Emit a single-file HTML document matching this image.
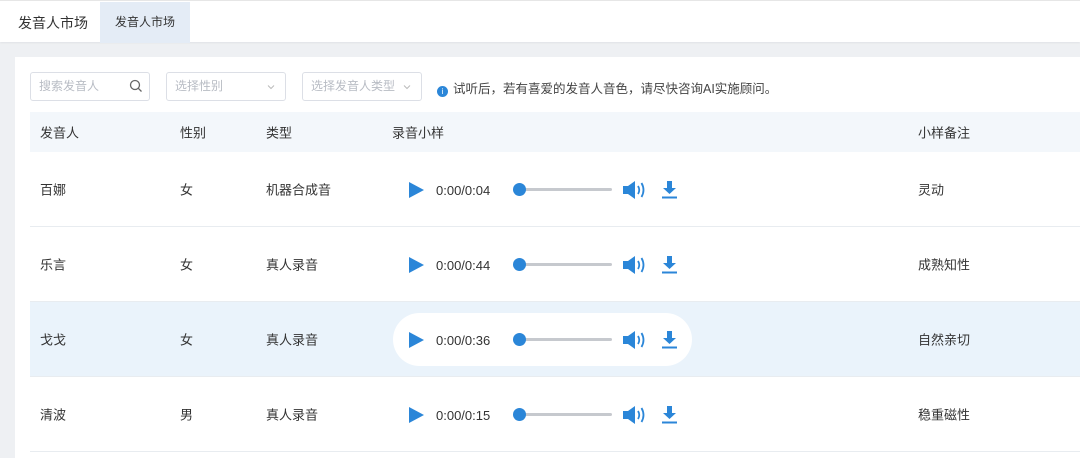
<!DOCTYPE html>
<html><head><meta charset="utf-8"><style>
*{margin:0;padding:0;box-sizing:border-box}
body{width:1080px;height:458px;overflow:hidden;background:#eef0f3;font-family:"Liberation Sans","Noto Sans CJK SC",sans-serif;color:#333;position:relative}
.top{position:absolute;left:0;top:0;width:1080px;height:42px;background:#fff;border-top:1px solid #e6e6e6;box-shadow:0 1px 2px rgba(0,0,0,.06)}
.tab1{position:absolute;left:18px;top:12px;font-size:14px;color:#333}
.tab2{position:absolute;left:100px;top:1px;width:90px;height:41px;background:#e4ecf6;font-size:12px;color:#333;text-align:center;line-height:40px}
.panel{position:absolute;left:15px;top:57px;width:1065px;height:401px;background:#fff}
.in{position:absolute;top:72px;height:29px;border:1px solid #dcdfe6;border-radius:3px;font-size:12px;color:#b8bcc4;line-height:27px;padding-left:8px;background:#fff}
.in svg{position:absolute}
.info{position:absolute;left:437px;top:78px;font-size:12.5px;color:#444}
.info i{display:inline-block;width:11px;height:11px;border-radius:50%;background:#2b86d8;vertical-align:-1px;margin-right:5px;color:#fff;font-size:8px;font-style:normal;text-align:center;line-height:11px}
.hd{position:absolute;left:30px;top:112px;width:1050px;height:40px;background:#f3f7fb;font-size:13px;color:#333}
.row{position:absolute;left:30px;width:1050px;height:75px;border-bottom:1px solid #e8ecf0;font-size:13px;color:#333}
.c{position:absolute;top:50%;transform:translateY(-50%);white-space:nowrap}
.pill{position:absolute;left:363px;top:11px;width:299px;height:53px;border-radius:27px;background:#fff}
.pl{position:absolute;left:378px;top:0;height:75px;width:300px}
.pl .t{position:absolute;left:28px;top:31px;font-size:13px;color:#333}
.pl .bar{position:absolute;left:110px;top:36px;width:94px;height:3px;background:#c6c9ce;border-radius:2px}
.pl .dot{position:absolute;left:105px;top:31px;width:13px;height:13px;border-radius:50%;background:#2b86d8}
.pl svg{position:absolute}
</style></head><body>
<div class="top"><div class="tab1">发音人市场</div><div class="tab2">发音人市场</div></div>
<div class="panel"></div>
<div class="in" style="left:30px;width:120px">搜索发音人<svg style="left:98px;top:6px" width="14" height="14" viewBox="0 0 14 14"><circle cx="6" cy="6" r="4.5" fill="none" stroke="#666" stroke-width="1.3"/><path d="M9.3 9.3L12.5 12.5" stroke="#666" stroke-width="1.3"/></svg></div>
<div class="in" style="left:166px;width:120px">选择性别<svg style="left:100px;top:11px" width="8" height="6" viewBox="0 0 8 6"><path d="M1 1.5L4 4.5L7 1.5" fill="none" stroke="#bbb"/></svg></div>
<div class="in" style="left:302px;width:120px">选择发音人类型<svg style="left:100px;top:11px" width="8" height="6" viewBox="0 0 8 6"><path d="M1 1.5L4 4.5L7 1.5" fill="none" stroke="#bbb"/></svg></div>
<div class="info"><i>i</i>试听后，若有喜爱的发音人音色，请尽快咨询AI实施顾问。</div>
<div class="hd"><span class="c" style="left:10px">发音人</span><span class="c" style="left:150px">性别</span><span class="c" style="left:236px">类型</span><span class="c" style="left:362px">录音小样</span><span class="c" style="left:888px">小样备注</span></div>
<script>
var d=[["百娜","女","机器合成音","0:00/0:04","灵动"],["乐言","女","真人录音","0:00/0:44","成熟知性"],["戈戈","女","真人录音","0:00/0:36","自然亲切"],["清波","男","真人录音","0:00/0:15","稳重磁性"]];
var h="";
d.forEach(function(r,i){
h+='<div class="row" style="top:'+(152+i*75)+'px;'+(i==2?'background:#eaf3fb;':'')+'">'+(i==2?'<div class="pill"></div>':'')+
'<span class="c" style="left:10px">'+r[0]+'</span><span class="c" style="left:150px">'+r[1]+'</span><span class="c" style="left:236px">'+r[2]+'</span>'+
'<div class="pl"><svg style="left:0;top:29px" width="17" height="18" viewBox="0 0 17 18"><path d="M1 1L16 9L1 17Z" fill="#2b86d8"/></svg><span class="t">'+r[3]+'</span><div class="bar"></div><div class="dot"></div>'+
'<svg style="left:214px;top:28px" width="26" height="20" viewBox="0 0 26 20"><path d="M1 6H6L13 1V19L6 14H1Z" fill="#2b86d8"/><path d="M16 6Q18.5 10 16 14" fill="none" stroke="#2b86d8" stroke-width="1.8"/><path d="M19.5 3Q23.5 10 19.5 17" fill="none" stroke="#2b86d8" stroke-width="1.8"/></svg>'+
'<svg style="left:253px;top:28px" width="17" height="19" viewBox="0 0 17 19"><path d="M6 1H11V8H15L8.5 14L2 8H6Z" fill="#2b86d8"/><rect x="1" y="16.5" width="15" height="2" fill="#2b86d8"/></svg></div>'+
'<span class="c" style="left:888px">'+r[4]+'</span></div>';});
document.write(h);
</script>
</body></html>
